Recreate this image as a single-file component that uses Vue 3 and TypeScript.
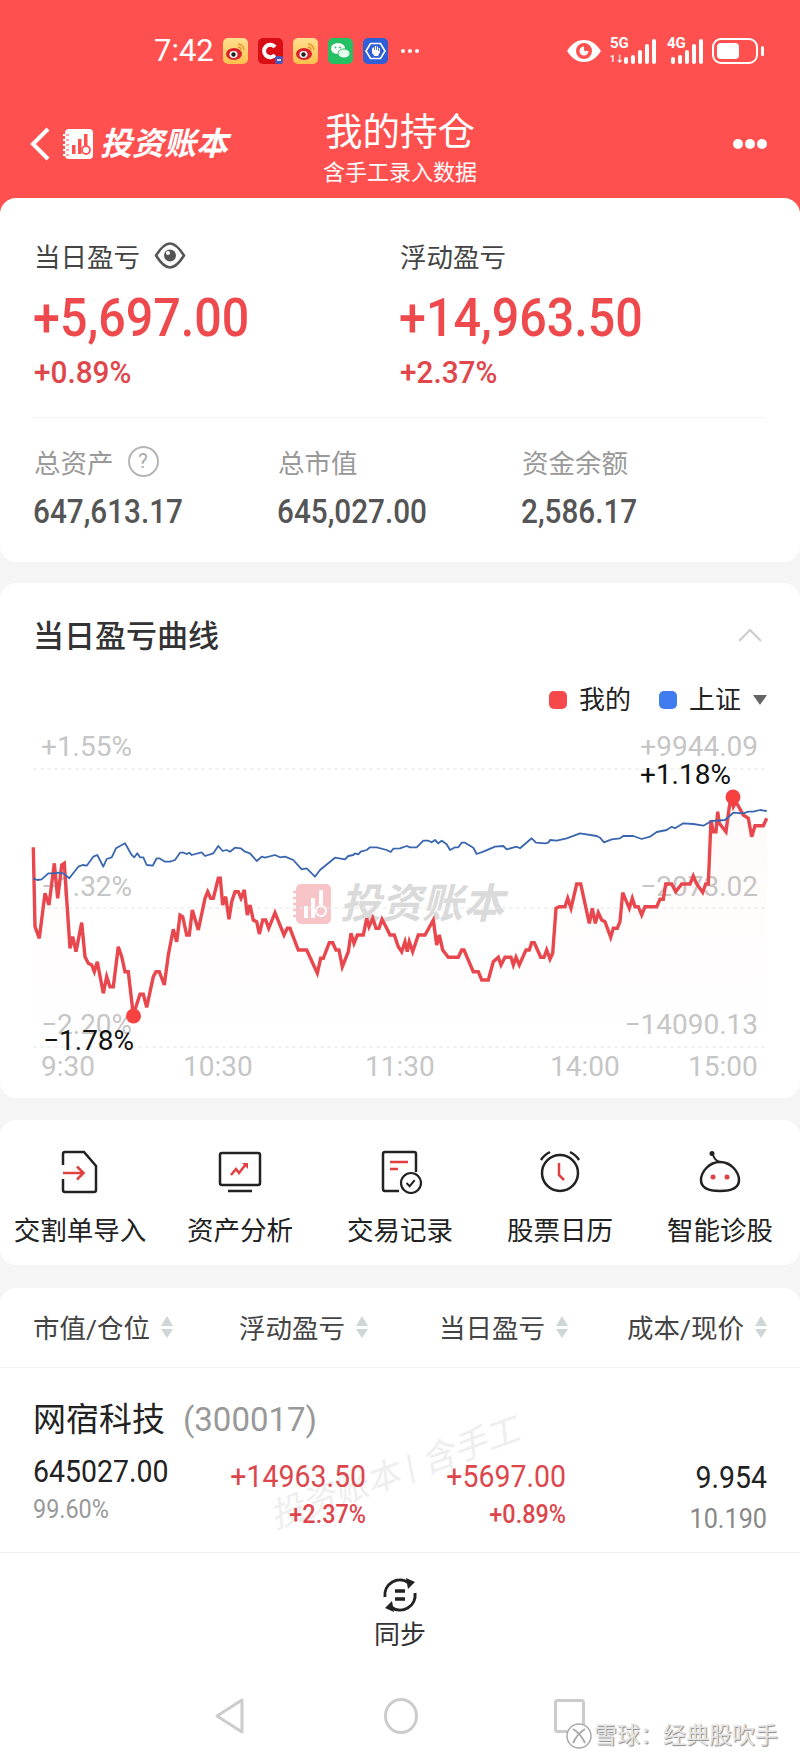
<script setup lang="ts">
type Pt = [number, number];

// traced from the chart: x in 1/3 px, y in 1/3 px offset by the chart top
const redLeft: Pt[] = [[100,562],[105,800],[118,835],[135,700],[147,735],[163,610],[173,715],[185,615],[193,610],[210,865],[218,830],[228,875],[245,788],[255,890],[265,910],[275,915],[283,935],[292,905],[310,1000],[320,950],[330,980],[340,980],[355,860],[365,890],[375,935],[385,935],[400,1065],[420,1003],[430,1003],[440,1042],[460,950],[468,935],[478,935],[493,975],[505,885],[520,808],[530,845],[540,765],[548,770],[560,825],[568,825],[577,750],[595,810],[615,715],[623,695],[632,715],[640,715],[655,655],[661,655],[668,735],[677,710],[687,778],[695,725],[705,695],[715,695],[723,715],[733,690],[742,765],[750,735],[760,780],[770,785],[778,822],[788,780],[797,780],[806,805],[825,758],[852,825],[862,805],[870,805],[895,870],[920,870],[952,940],[962,895],[970,895],[988,848],[998,848],[1008,870],[1017,870],[1027,920],[1045,875],[1053,820],[1062,850],[1072,825],[1090,825],[1100,775],[1107,800],[1118,775],[1128,805],[1137,805],[1146,778],[1160,805],[1170,825],[1183,825],[1195,860]];
const redRight: Pt[] = [[5,875],[15,845],[22,875],[28,845],[38,875],[55,825],[75,825],[100,780],[110,855],[118,825],[128,870],[145,892],[175,892],[185,870],[192,870],[220,935],[235,935],[245,960],[265,960],[280,905],[295,892],[303,915],[315,892],[333,892],[340,915],[348,892],[358,915],[378,870],[388,870],[395,848],[403,848],[422,892],[432,892],[440,870],[450,897],[458,880],[468,745],[478,740],[495,740],[503,715],[513,745],[530,672],[542,672],[568,790],[577,745],[586,790],[595,758],[605,780],[615,785],[632,832],[640,805],[652,805],[660,785],[668,698],[688,745],[697,715],[705,740],[715,740],[725,765],[735,740],[770,740],[780,718],[790,718],[797,672],[815,672],[827,695],[845,672],[870,672],[880,648],[890,672],[908,697],[917,672],[925,672],[933,480],[940,515],[948,515],[953,455],[958,490],[978,515],[988,440],[993,415],[1000,440],[1008,425],[1030,465],[1045,475],[1055,530],[1065,497],[1090,497],[1100,475]];
const blueLeft: Pt[] = [[100,655],[112,660],[125,658],[145,640],[160,640],[175,638],[190,640],[208,655],[235,620],[248,615],[260,617],[280,590],[292,585],[310,620],[320,597],[335,592],[348,565],[375,550],[395,585],[403,592],[412,580],[420,592],[430,592],[440,615],[458,617],[470,595],[478,595],[495,605],[510,605],[525,600],[540,578],[550,578],[560,582],[568,578],[575,585],[605,577],[615,588],[640,580],[655,558],[668,573],[680,570],[690,575],[705,563],[722,565],[735,575],[750,580],[770,603],[785,590],[795,593],[825,585],[840,592],[855,590],[880,600],[905,628],[920,625],[945,650],[960,630],[1005,593],[1035,598],[1045,588],[1060,585],[1065,580],[1075,583],[1082,575],[1100,570],[1110,562],[1130,562],[1160,570],[1172,576],[1180,566],[1200,565]];
const blueRight: Pt[] = [[20,558],[30,562],[50,562],[70,542],[85,542],[95,547],[105,540],[115,550],[125,542],[140,553],[150,570],[165,562],[175,562],[185,548],[195,548],[220,563],[230,582],[250,575],[285,560],[310,558],[320,568],[350,560],[360,565],[395,535],[408,548],[435,550],[445,548],[450,540],[470,542],[500,535],[540,520],[590,528],[600,533],[612,547],[635,538],[660,535],[670,528],[700,528],[725,537],[750,530],[770,516],[800,510],[815,500],[825,505],[850,490],[880,492],[910,497],[935,483],[975,480],[1000,458],[1030,460],[1045,455],[1060,455],[1080,450],[1100,453]];

const toLine = (left: Pt[], right: Pt[]) =>
  [...left, ...right.map(([x, y]): Pt => [x + 1200, y])]
    .map(([x, y]) => `${(x / 3).toFixed(1)},${(y / 3 - 60).toFixed(1)}`)
    .join(" ");

const redLine = toLine(redLeft, redRight);
const blueLine = toLine(blueLeft, blueRight);
const redArea = `33,327 ${redLine} 767,327`;

const gridLines = [49, 188, 327];
const bars = [7, 9, 14, 20, 25];

const axisLeft = [
  { text: "+1.55%", top: 10 },
  { text: "−1.32%", top: 150 },
  { text: "−2.20%", top: 288 }
];
const axisRight = [
  { text: "+9944.09", top: 10 },
  { text: "−2073.02", top: 150 },
  { text: "−14090.13", top: 288 }
];
const times = [
  { text: "9:30", left: 41 },
  { text: "10:30", left: 183 },
  { text: "11:30", left: 365 },
  { text: "14:00", left: 550 },
  { text: "15:00", left: 688 }
];
const peaks = [
  { text: "−1.78%", left: 43, top: 304 },
  { text: "+1.18%", left: 640, top: 38 }
];

const sortHeads = ["市值/仓位", "浮动盈亏", "当日盈亏", "成本/现价"];
</script>

<template>
  <div class="page">
    <header class="top">
      <div class="status">
        <span class="clock">7:42</span>
        <div class="apps">
          <svg class="app" viewBox="0 0 25 26">
            <defs>
              <linearGradient id="wb" x1="0" y1="0" x2="0" y2="1">
                <stop offset="0" stop-color="#ffe08f" />
                <stop offset="1" stop-color="#ffc04d" />
              </linearGradient>
            </defs>
            <rect width="25" height="26" rx="5" fill="url(#wb)" />
            <ellipse cx="11" cy="16" rx="8" ry="6" fill="#d8232a" />
            <ellipse cx="10.5" cy="16.5" rx="4" ry="3.4" fill="#fff" />
            <circle cx="10.5" cy="16.5" r="2.2" fill="#222" />
            <path d="M15 6a6 6 0 0 1 6 6M15 9a3 3 0 0 1 3 3" fill="none" stroke="#e8962c" stroke-width="1.4" />
          </svg>
          <svg class="app" viewBox="0 0 25 26">
            <rect width="25" height="26" rx="5" fill="#d90d14" />
            <path d="M17 9a6.2 6.2 0 1 0 0 8" fill="none" stroke="#fff" stroke-width="4" />
            <rect x="17" y="18" width="8" height="8" rx="2" fill="#4a55b8" />
            <path d="M19 22h4" stroke="#fff" stroke-width="1.5" />
          </svg>
          <svg class="app" viewBox="0 0 25 26">
            <rect width="25" height="26" rx="5" fill="url(#wb)" />
            <ellipse cx="11" cy="16" rx="8" ry="6" fill="#d8232a" />
            <ellipse cx="10.5" cy="16.5" rx="4" ry="3.4" fill="#fff" />
            <circle cx="10.5" cy="16.5" r="2.2" fill="#222" />
            <path d="M15 6a6 6 0 0 1 6 6M15 9a3 3 0 0 1 3 3" fill="none" stroke="#e8962c" stroke-width="1.4" />
          </svg>
          <svg class="app" viewBox="0 0 25 26">
            <rect width="25" height="26" rx="5" fill="#25c064" />
            <ellipse cx="10" cy="10.5" rx="7" ry="5.5" fill="#fff" />
            <ellipse cx="16" cy="15.5" rx="6" ry="4.6" fill="#e8fbef" stroke="#25c064" />
            <circle cx="7.5" cy="9.5" r="1" fill="#25c064" />
            <circle cx="12" cy="9.5" r="1" fill="#25c064" />
          </svg>
          <svg class="app" viewBox="0 0 25 26">
            <rect width="25" height="26" rx="5" fill="#2f5fd6" />
            <path d="M7.5 5.5h10l4.5 7.5-4.5 7.5h-10L3 13z" fill="none" stroke="#fff" stroke-width="1.6" />
            <path d="M9 11v4l2.500 3h3.500l2-4v-4h-1.200v3h-.8V8.500h-1.200V12h-.8V8h-1.200v4h-.8V9.500H9.800z" fill="#fff" />
          </svg>
        </div>
        <span class="more-dots"><i></i><i></i><i></i></span>
        <div class="sys">
          <svg class="sys-eye" viewBox="0 0 36 24">
            <path fill-rule="evenodd" fill="#fff" d="M1 12C6 4 12 1 18 1s12 3 17 11c-5 8-11 11-17 11S6 20 1 12zm17-8a8 8 0 1 0 0 16 8 8 0 0 0 0-16z" />
            <path fill="#fff" d="M18 7.500a4.500 4.500 0 1 0 4.500 4.500h-3a1.500 1.500 0 0 1-1.500-1.500z" />
          </svg>
          <div class="signal">
            <span class="net net-5g">5G</span>
            <span class="updown">1↓</span>
            <i v-for="h in bars" :key="h" :style="{ height: h + 'px' }"></i>
          </div>
          <div class="signal signal-4g">
            <span class="net">4G</span>
            <i v-for="h in bars" :key="h" :style="{ height: h + 'px' }"></i>
          </div>
          <div class="battery"><span class="level"></span></div>
          <span class="nub"></span>
        </div>
      </div>
      <div class="nav">
        <div class="nav-left">
          <svg class="back" viewBox="0 0 22 34"><path d="M19 2 4 17l15 15" fill="none" stroke="#fff" stroke-width="4" /></svg>
          <svg class="brand-logo" viewBox="0 0 30 30">
            <rect x="2" width="28" height="30" rx="4" fill="#fff" />
            <path d="M0 6h5M0 11h5M0 16h5M0 21h5M0 26h5" stroke="#fff" stroke-width="2" />
            <path d="M3 6h3M3 11h3M3 16h3M3 21h3M3 26h3" stroke="#ff5050" stroke-width="1" />
            <rect x="9" y="16" width="3.5" height="9" fill="#ff5050" />
            <rect x="15" y="10" width="3.5" height="15" fill="#ff5050" />
            <rect x="21" y="5" width="3.5" height="11" fill="#ff5050" />
            <circle cx="23" cy="21" r="4" fill="none" stroke="#ff5050" stroke-width="1.8" />
          </svg>
          <span class="brand">投资账本</span>
        </div>
        <div class="nav-title">
          <div class="title">我的持仓</div>
          <div class="subtitle">含手工录入数据</div>
        </div>
        <div class="nav-right"><i></i><i></i><i></i></div>
      </div>
    </header>

    <section class="card summary">
      <div class="pnl-row">
        <div class="pnl">
          <div class="pnl-label">
            当日盈亏
            <svg class="eye" viewBox="0 0 32 27">
              <path d="M2 13.500C8 4 12 1.500 16 1.500S24 4 30 13.500C24 23 20 25.500 16 25.500S8 23 2 13.500z" fill="none" stroke="#555" stroke-width="2.6" stroke-linejoin="round" />
              <circle cx="16" cy="13.5" r="6" fill="#555" />
              <circle cx="14" cy="11" r="2" fill="#fff" />
            </svg>
          </div>
          <div class="pnl-value">+5,697.00</div>
          <div class="pnl-rate">+0.89%</div>
        </div>
        <div class="pnl">
          <div class="pnl-label">浮动盈亏</div>
          <div class="pnl-value">+14,963.50</div>
          <div class="pnl-rate">+2.37%</div>
        </div>
      </div>
      <div class="assets">
        <div class="asset">
          <div class="asset-label">总资产 <span class="help">?</span></div>
          <div class="asset-value">647,613.17</div>
        </div>
        <div class="asset">
          <div class="asset-label">总市值</div>
          <div class="asset-value">645,027.00</div>
        </div>
        <div class="asset">
          <div class="asset-label">资金余额</div>
          <div class="asset-value">2,586.17</div>
        </div>
      </div>
    </section>

    <section class="card curve">
      <div class="curve-head">
        <h2>当日盈亏曲线</h2>
        <svg class="chevron" viewBox="0 0 24 14"><path d="M1 13 12 2l11 11" fill="none" stroke="#ccc" stroke-width="2" /></svg>
      </div>
      <div class="legend">
        <span class="swatch swatch-red"></span>
        <span class="legend-text">我的</span>
        <span class="swatch swatch-blue"></span>
        <span class="legend-text">上证</span>
        <span class="caret"></span>
      </div>
      <div class="chart">
        <span v-for="a in axisLeft" :key="a.text" class="axis" :style="{ left: '41px', top: a.top + 'px' }">{{ a.text }}</span>
        <span v-for="a in axisRight" :key="a.text" class="axis" :style="{ right: '42px', top: a.top + 'px' }">{{ a.text }}</span>
        <span v-for="t in times" :key="t.text" class="axis" :style="{ left: t.left + 'px', top: '330px' }">{{ t.text }}</span>
        <div class="mark">
          <svg class="mark-logo" viewBox="0 0 38 40">
            <rect x="3" width="35" height="40" rx="5" fill="#f7c5c8" />
            <path d="M0 8h6M0 14h6M0 20h6M0 26h6M0 32h6" stroke="#f7c5c8" stroke-width="2.5" />
            <rect x="11" y="22" width="4" height="12" fill="#fff" />
            <rect x="18" y="14" width="4" height="20" fill="#fff" />
            <rect x="26" y="6" width="4" height="15" fill="#fff" />
            <circle cx="28" cy="27" r="5" fill="none" stroke="#fff" stroke-width="2" />
          </svg>
          <span>投资账本</span>
        </div>
        <svg class="plot" viewBox="0 0 800 378">
          <defs>
            <linearGradient id="area" x1="0" y1="0" x2="0" y2="1">
              <stop offset="0" stop-color="#ff5050" stop-opacity="0.03" />
              <stop offset="1" stop-color="#ff5050" stop-opacity="0" />
            </linearGradient>
          </defs>
          <line v-for="y in gridLines" :key="y" x1="33" x2="765" :y1="y" :y2="y" stroke="#e6e6e6" stroke-dasharray="4 3" />
          <polygon :points="redArea" fill="url(#area)" />
          <polyline :points="redLine" fill="none" stroke="#e8474d" stroke-width="3.4" />
          <polyline :points="blueLine" fill="none" stroke="#3a66b0" stroke-width="1.8" stroke-linejoin="round" />
          <circle cx="133.5" cy="296" r="7.5" fill="#f5413f" />
          <circle cx="733" cy="77" r="7.5" fill="#f5413f" />
        </svg>
        <span v-for="p in peaks" :key="p.text" class="axis peak" :style="{ left: p.left + 'px', top: p.top + 'px' }">{{ p.text }}</span>
      </div>
    </section>

    <section class="card menu">
      <div class="menu-item">
        <svg viewBox="0 0 44 44">
          <path d="M5 15V4a2 2 0 0 1 2-2h19l12 14v24a2 2 0 0 1-2 2H7a2 2 0 0 1-2-2V29" fill="none" stroke="#222" stroke-width="2.5" />
          <path d="M5 23h20M19 16.500l6.500 6.500-6.500 6.500" fill="none" stroke="#e0403f" stroke-width="2.5" />
        </svg>
        <span>交割单导入</span>
      </div>
      <div class="menu-item">
        <svg viewBox="0 0 44 44">
          <rect x="2" y="3" width="40" height="32" rx="2" fill="none" stroke="#222" stroke-width="2.5" />
          <path d="M10 41h24" stroke="#222" stroke-width="2.5" />
          <path d="M13 25l5-6 3 4 7-9" fill="none" stroke="#e0403f" stroke-width="2.5" />
          <path d="M24 13h6v6z" fill="#e0403f" />
        </svg>
        <span>资产分析</span>
      </div>
      <div class="menu-item">
        <svg viewBox="0 0 44 44">
          <path d="M21 41H7a2 2 0 0 1-2-2V4a2 2 0 0 1 2-2h29a2 2 0 0 1 2 2v18" fill="none" stroke="#222" stroke-width="2.5" />
          <path d="M12 12h18" stroke="#e0403f" stroke-width="2.5" />
          <path d="M12 19h8" stroke="#e0403f" stroke-width="2.5" />
          <circle cx="33" cy="33" r="10" fill="none" stroke="#222" stroke-width="2.2" />
          <path d="M28.500 33l3.200 3.200 5-6" fill="none" stroke="#222" stroke-width="2" />
        </svg>
        <span>交易记录</span>
      </div>
      <div class="menu-item">
        <svg viewBox="0 0 44 44">
          <circle cx="22" cy="23" r="18" fill="none" stroke="#222" stroke-width="2.5" />
          <path d="M3 10Q6 5 12 2M41 10Q38 5 32 2" fill="none" stroke="#222" stroke-width="2.5" />
          <path d="M21 13v12l5 5" fill="none" stroke="#e0403f" stroke-width="2.5" />
        </svg>
        <span>股票日历</span>
      </div>
      <div class="menu-item">
        <svg viewBox="0 0 44 44">
          <path d="M22 12C33 12 41 22 41 30c0 8-8 11-19 11S3 38 3 30c0-8 8-18 19-18z" fill="none" stroke="#222" stroke-width="2.5" />
          <circle cx="14" cy="3.5" r="2.5" fill="#222" />
          <path d="M15 5q2 6 7 7" fill="none" stroke="#222" stroke-width="2" />
          <circle cx="15" cy="27" r="2.5" fill="#e0403f" />
          <circle cx="29" cy="27" r="2.5" fill="#e0403f" />
        </svg>
        <span>智能诊股</span>
      </div>
    </section>

    <section class="card holdings">
      <div class="grid heads">
        <div v-for="(h, i) in sortHeads" :key="h" class="head" :class="{ 'head-first': i === 0 }">
          <span>{{ h }}</span>
          <span class="sort"><i class="up"></i><i class="down"></i></span>
        </div>
      </div>
      <div class="row">
        <div class="stamp">投资账本 | 含手工</div>
        <div class="stock">网宿科技<span class="code">(300017)</span></div>
        <div class="grid cells">
          <div class="cell cell-first">
            <div class="val">645027.00</div>
            <div class="sub">99.60%</div>
          </div>
          <div class="cell cell-up">
            <div class="val">+14963.50</div>
            <div class="sub">+2.37%</div>
          </div>
          <div class="cell cell-up">
            <div class="val">+5697.00</div>
            <div class="sub">+0.89%</div>
          </div>
          <div class="cell cell-last">
            <div class="val">9.954</div>
            <div class="sub">10.190</div>
          </div>
        </div>
      </div>
    </section>

    <footer class="foot">
      <svg class="sync" viewBox="0 0 36 36">
        <path d="M3 20A15 15 0 0 1 27 6" fill="none" stroke="#222" stroke-width="3" />
        <path d="M33 16A15 15 0 0 1 9 30" fill="none" stroke="#222" stroke-width="3" />
        <path d="M24 1l9 4-7 7z" fill="#222" />
        <path d="M12 35l-9-4 7-7z" fill="#222" />
        <path d="M13 14h10M13 22h10" stroke="#222" stroke-width="3.5" />
      </svg>
      <div class="sync-text">同步</div>
      <div class="sysnav">
        <svg width="29" height="36" viewBox="0 0 29 36"><path d="M27 2v32L2 18z" fill="none" stroke="#ccc" stroke-width="3" stroke-linejoin="round" /></svg>
        <svg class="home" width="34" height="36" viewBox="0 0 34 36"><ellipse cx="17" cy="18" rx="15.5" ry="16.5" fill="none" stroke="#ccc" stroke-width="3" /></svg>
        <svg width="31" height="36" viewBox="0 0 31 36"><rect x="1.5" y="2.5" width="28" height="31" rx="2" fill="none" stroke="#ccc" stroke-width="3" /></svg>
      </div>
      <div class="credit">
        <svg width="28" height="28" viewBox="0 0 28 28">
          <circle cx="14" cy="14" r="12" fill="#fff" stroke="#aaa" stroke-width="1.5" />
          <path d="M8 7q8 5 12 14M20 7q-8 5-12 14" fill="none" stroke="#aaa" stroke-width="2" />
        </svg>
        <span>雪球：经典股吹手</span>
      </div>
    </footer>
  </div>
</template>

<style>
html,
body {
  margin: 0;
  background: #f5f5f5;
}
</style>

<style scoped>
.page {
  width: 800px;
  height: 1760px;
  overflow: hidden;
  background: #f5f5f5;
  font-family: Roboto, "Noto Sans CJK SC", sans-serif;
  color: #222;
}

.top {
  height: 214px;
  box-sizing: border-box;
  padding-top: 38px;
  background: #ff5050;
  color: #fff;
}

.status {
  display: flex;
  align-items: center;
  height: 26px;
  padding-left: 154px;
}

.clock {
  width: 69px;
  font-size: 31px;
  line-height: 26px;
}

.apps {
  display: flex;
  gap: 10px;
}

.app {
  width: 25px;
  height: 26px;
}

.more-dots {
  display: flex;
  gap: 3px;
  margin-left: 13px;
}

.more-dots i {
  width: 4px;
  height: 4px;
  border-radius: 50%;
  background: #fff;
}

.sys {
  display: flex;
  align-items: center;
  margin-left: auto;
  padding-right: 36px;
}

.sys-eye {
  width: 36px;
  height: 24px;
  margin-right: 7px;
}

.signal {
  position: relative;
  display: flex;
  align-items: flex-end;
  gap: 3px;
  height: 26px;
  width: 48px;
  padding-left: 15px;
  box-sizing: border-box;
}

.signal i {
  flex: none;
  width: 4px;
  border-radius: 2px;
  background: #fff;
}

.signal-4g {
  width: 36px;
  margin-left: 10px;
  padding-left: 4px;
}

.net {
  position: absolute;
  top: -1px;
  left: 0;
  font-size: 15px;
  line-height: 13px;
  font-weight: 700;
}

.net-5g {
  left: 1px;
}

.updown {
  position: absolute;
  bottom: 0;
  left: 1px;
  font-size: 9px;
  line-height: 9px;
  font-weight: 700;
}

.battery {
  width: 46px;
  height: 26px;
  box-sizing: border-box;
  margin-left: 9px;
  padding: 3px;
  border: 2.5px solid #fff;
  border-radius: 9px;
}

.level {
  display: block;
  width: 22px;
  height: 100%;
  border-radius: 4px;
  background: #fff;
}

.nub {
  width: 3px;
  height: 10px;
  margin-left: 3px;
  border-radius: 2px;
  background: #fff;
}

.nav {
  display: grid;
  grid-template-columns: 1fr auto 1fr;
  align-items: center;
  margin-top: 49px;
}

.nav-left {
  display: flex;
  align-items: center;
  padding-left: 29px;
  margin-bottom: 13px;
}

.back {
  width: 22px;
  height: 34px;
}

.brand-logo {
  width: 30px;
  height: 30px;
  margin-left: 12px;
}

.brand {
  margin-left: 7px;
  font-size: 32px;
  font-weight: 700;
  font-style: italic;
  line-height: 38px;
  white-space: nowrap;
}

.nav-title {
  text-align: center;
}

.title {
  font-size: 37.5px;
  line-height: 38px;
}

.subtitle {
  margin-top: 7px;
  font-size: 22px;
  line-height: 30px;
}

.nav-right {
  display: flex;
  justify-content: flex-end;
  gap: 2px;
  padding-right: 33px;
  margin-bottom: 13px;
}

.nav-right i {
  width: 10px;
  height: 10px;
  border-radius: 50%;
  background: #fff;
}

.card {
  border-radius: 16px;
  background: #fff;
}

.summary {
  height: 364px;
  box-sizing: border-box;
  margin-top: -16px;
  padding: 41px 35px 0 34px;
}

.pnl-row {
  display: grid;
  grid-template-columns: 366px 1fr;
  height: 178px;
  border-bottom: 1px solid #f3f3f3;
}

.pnl-label {
  display: flex;
  align-items: center;
  gap: 14px;
  height: 32px;
  font-size: 26.5px;
  color: #444;
}

.eye {
  width: 32px;
  height: 27px;
}

.pnl-value {
  margin-top: 17px;
  margin-left: -1px;
  font-size: 53.5px;
  font-weight: 500;
  line-height: 60px;
  color: #ee4a4d;
  transform: scaleX(0.905);
  transform-origin: left center;
  white-space: nowrap;
}

.pnl-rate {
  margin-top: 6px;
  font-size: 32px;
  font-weight: 500;
  line-height: 36px;
  color: #e0474c;
  transform: scaleX(0.93);
  transform-origin: left center;
}

.assets {
  display: grid;
  grid-template-columns: 244px 244px 1fr;
  margin-top: 26px;
}

.asset-label {
  display: flex;
  align-items: center;
  height: 34px;
  font-size: 26.5px;
  color: #999;
}

.help {
  display: flex;
  align-items: center;
  justify-content: center;
  width: 27px;
  height: 27px;
  margin-left: 14px;
  border: 2px solid #b5b5b5;
  border-radius: 50%;
  font-size: 20px;
  color: #aaa;
}

.asset-value {
  margin-top: 16px;
  margin-left: -1px;
  font-size: 33px;
  font-weight: 500;
  line-height: 36px;
  color: #555;
  transform: scaleX(0.9);
  transform-origin: left center;
}

.curve {
  height: 515px;
  margin-top: 21px;
}

.curve-head {
  display: flex;
  align-items: center;
  justify-content: space-between;
  height: 104px;
  padding: 0 38px 0 33px;
}

.curve-head h2 {
  margin: -4px 0 0;
  font-size: 31px;
  font-weight: 500;
  color: #333;
}

.chevron {
  width: 24px;
  height: 14px;
}

.legend {
  display: flex;
  align-items: center;
  justify-content: flex-end;
  height: 22px;
  margin-top: 2px;
  margin-bottom: 9px;
  padding-right: 33px;
}

.swatch {
  width: 18px;
  height: 18px;
  border-radius: 5px;
}

.swatch-red {
  background: #f5484a;
}

.swatch-blue {
  margin-left: 28px;
  background: #3f7cf0;
}

.legend-text {
  margin-left: 12px;
  font-size: 26px;
  line-height: 22px;
  color: #222;
}

.caret {
  width: 0;
  height: 0;
  margin-left: 12px;
  border-top: 10px solid #666;
  border-left: 7.5px solid transparent;
  border-right: 7.5px solid transparent;
}

.chart {
  position: relative;
  height: 378px;
}

.plot {
  position: absolute;
  inset: 0;
  width: 800px;
  height: 378px;
}

.axis {
  position: absolute;
  font-size: 28px;
  line-height: 34px;
  color: #c6c6c6;
  white-space: nowrap;
}

.peak {
  color: #111;
}

.mark {
  position: absolute;
  left: 293px;
  top: 162px;
  display: flex;
  align-items: center;
  gap: 9px;
  color: #dadada;
}

.mark-logo {
  width: 38px;
  height: 40px;
}

.mark span {
  font-size: 41px;
  line-height: 44px;
  font-weight: 700;
  font-style: italic;
}

.menu {
  display: grid;
  grid-template-columns: repeat(5, 160px);
  height: 145px;
  margin-top: 22px;
  box-sizing: border-box;
  padding-top: 30px;
}

.menu-item {
  display: flex;
  flex-direction: column;
  align-items: center;
  gap: 21px;
}

.menu-item svg {
  width: 44px;
  height: 44px;
}

.menu-item span {
  font-size: 26.5px;
  line-height: 32px;
  white-space: nowrap;
  color: #222;
}

.holdings {
  margin-top: 23px;
  border-radius: 16px 16px 0 0;
}

.grid {
  display: grid;
  grid-template-columns: 140px 195px 200px 199px;
  padding-left: 33px;
}

.heads {
  align-items: center;
  height: 77px;
  padding-bottom: 2px;
  border-bottom: 1px solid #f3f3f3;
}

.head {
  display: flex;
  align-items: center;
  justify-content: flex-end;
  gap: 11px;
  font-size: 26.5px;
  color: #444;
  white-space: nowrap;
}

.head-first {
  justify-content: flex-start;
}

.sort {
  display: flex;
  flex-direction: column;
  gap: 3px;
}

.sort i {
  width: 0;
  height: 0;
  border-left: 6px solid transparent;
  border-right: 6px solid transparent;
}

.sort .up {
  border-bottom: 10px solid #cfd6d8;
}

.sort .down {
  border-top: 9px solid #cfd6d8;
}

.row {
  position: relative;
  height: 184px;
  box-sizing: border-box;
  padding-top: 32px;
}

.stamp {
  position: absolute;
  left: 262px;
  top: 78px;
  font-size: 34px;
  font-style: italic;
  color: #eee;
  white-space: nowrap;
  transform: rotate(-20deg);
}

.stock {
  position: relative;
  padding-left: 33px;
  font-size: 33px;
  line-height: 40px;
  color: #222;
}

.code {
  margin-left: 18px;
  color: #999;
}

.cells {
  position: relative;
  margin-top: 13px;
  grid-template-columns: 133px 200px 200px 201px;
}

.cell {
  text-align: right;
}

.cell-first {
  margin-top: -2px;
  text-align: left;
}

.cell-up {
  padding-top: 3px;
  color: #dc474d;
}

.cell-last {
  padding-top: 4px;
}

.val {
  font-size: 32px;
  line-height: 40px;
  white-space: nowrap;
  transform: scaleX(0.89);
  transform-origin: right center;
}

.cell-first .val {
  transform-origin: left center;
  color: #222;
}

.cell-last .val {
  color: #222;
}

.sub {
  font-size: 26px;
  font-weight: 500;
  line-height: 36px;
  transform: scaleX(0.9);
  transform-origin: right center;
}

.cell-first .sub {
  transform-origin: left center;
  font-weight: 400;
  color: #999;
}

.cell-last .sub {
  margin-top: 4px;
  font-size: 28px;
  font-weight: 400;
  color: #888;
}

.foot {
  position: relative;
  height: 208px;
  box-sizing: border-box;
  display: flex;
  flex-direction: column;
  align-items: center;
  padding-top: 24px;
  border-top: 1px solid #eee;
  background: #fff;
}

.sync {
  width: 36px;
  height: 36px;
}

.sync-text {
  margin-top: 6px;
  font-size: 26px;
  line-height: 32px;
  color: #333;
}

.sysnav {
  display: flex;
  align-items: center;
  gap: 138px;
  margin-top: 47px;
  margin-left: -1px;
}

.home {
  position: relative;
  left: 2px;
}

.credit {
  position: absolute;
  right: 22px;
  top: 169px;
  display: flex;
  align-items: center;
  gap: 1px;
  font-size: 23px;
  line-height: 28px;
  color: #e4e4e4;
  text-shadow: 1px 1px 1px #888;
}
</style>
